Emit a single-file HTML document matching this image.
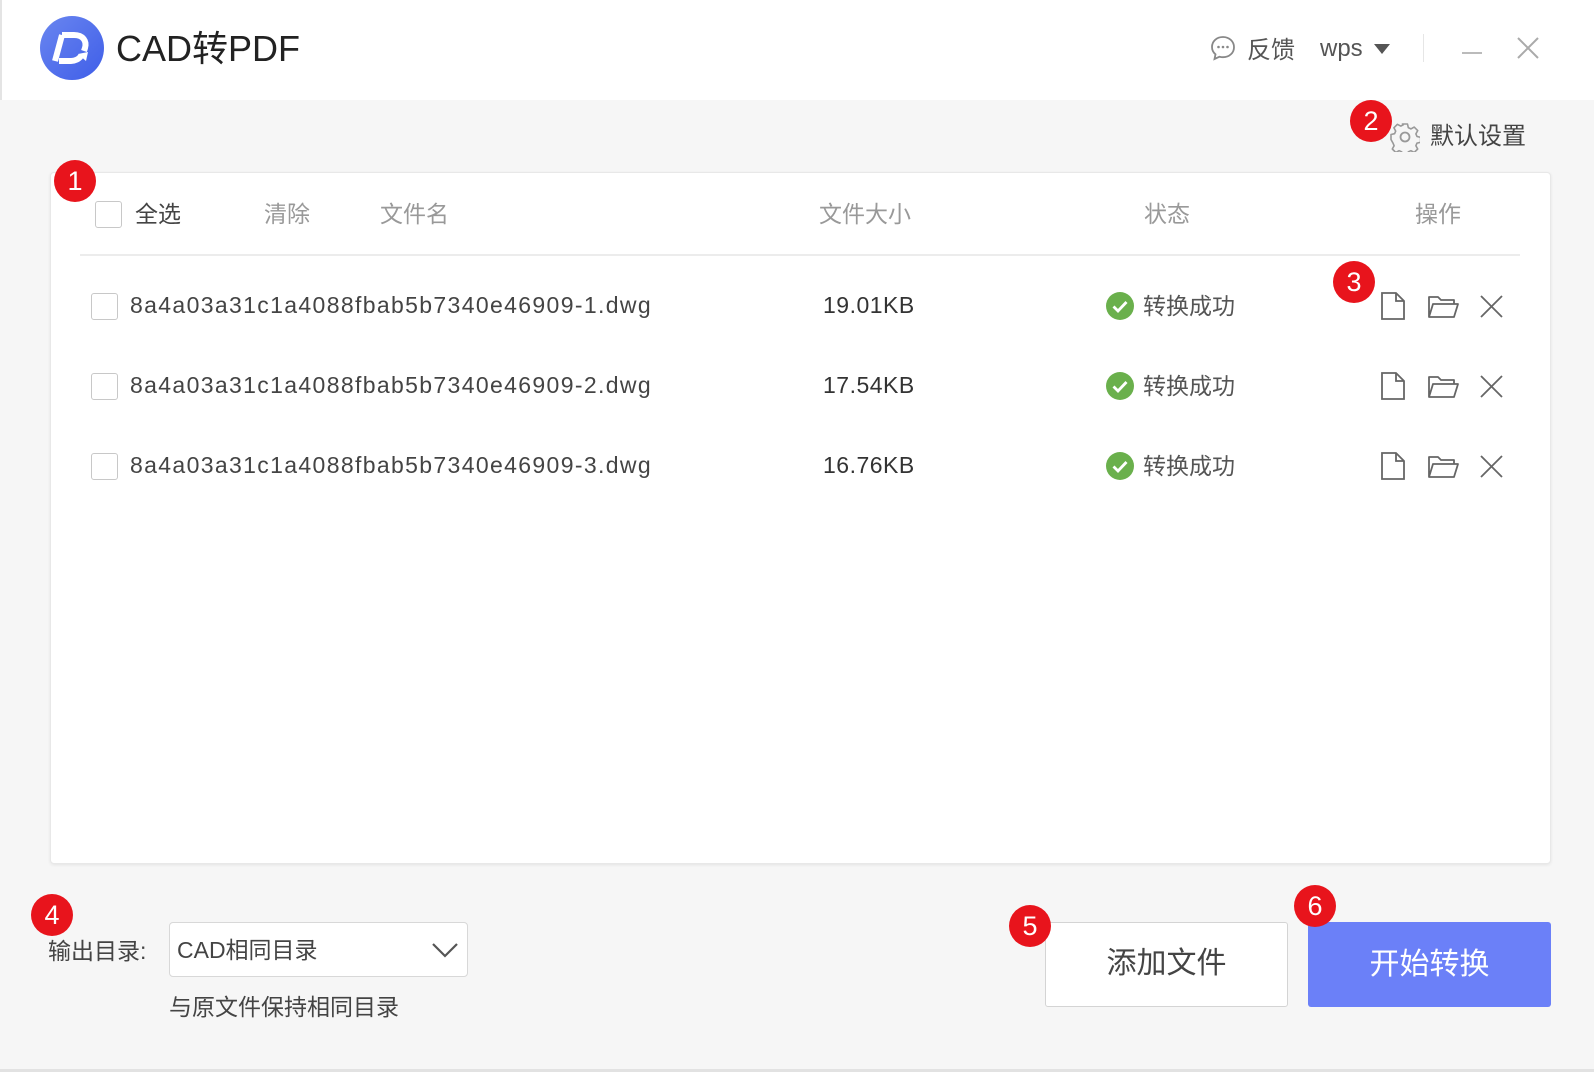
<!DOCTYPE html>
<html><head><meta charset="utf-8"><style>
*{margin:0;padding:0;box-sizing:border-box}
body{width:1594px;height:1072px;background:#f6f6f6;font-family:"Liberation Sans","Noto Sans CJK SC",sans-serif;position:relative;overflow:hidden;color:#333}
.a{position:absolute;white-space:nowrap}
.badge{position:absolute;width:42px;height:42px;border-radius:50%;background:#e8141c;color:#fff;font-size:27px;line-height:42px;text-align:center;font-family:"Liberation Sans",sans-serif}
.cb{position:absolute;width:27px;height:27px;border:1.5px solid #c8c8c8;border-radius:3px;background:#fff}
.fn{font-size:23px;color:#444;letter-spacing:1.35px}
.sz{font-size:23px;color:#333;letter-spacing:0.5px}
.st{font-size:23px;color:#555}
</style></head><body>
<div class="a" style="left:0;top:0;width:1594px;height:100px;background:#fff;border-left:2px solid #e4e4e4"></div>
<svg class="a" style="left:40px;top:16px" width="64" height="64" viewBox="0 0 64 64"><defs><linearGradient id="g" x1="0" y1="0" x2="1" y2="1"><stop offset="0" stop-color="#6a86f0"/><stop offset="1" stop-color="#3f5ee8"/></linearGradient></defs><circle cx="32" cy="32" r="32" fill="url(#g)"/><path d="M22 19h12c9 0 13 6 11 13l-1 3M19 45h12c4 0 8-2 10-5M22 19l-7 26" stroke="#fff" stroke-width="6" fill="none" stroke-linejoin="round"/><path d="M38 38l10-2-2 9z" fill="#fff"/></svg>
<div class="a" style="left:116px;top:20px;font-size:36px;color:#222">CAD转PDF</div>
<svg class="a" style="left:1209px;top:34px" width="28" height="28" viewBox="0 0 28 28"><path d="M14 3C7.5 3 3 7.5 3 13c0 3 1.3 5.5 3.5 7.3L5.5 25l5-2.3c1.1.3 2.3.5 3.5.5 6.5 0 11-4.5 11-10S20.5 3 14 3z" fill="none" stroke="#888" stroke-width="1.8"/><circle cx="9.5" cy="13" r="1.3" fill="#888"/><circle cx="14" cy="13" r="1.3" fill="#888"/><circle cx="18.5" cy="13" r="1.3" fill="#888"/></svg>
<div class="a" style="left:1247px;top:30px;font-size:24px;color:#555">反馈</div>
<div class="a" style="left:1320px;top:35px;font-size:24px;color:#555">wps</div>
<svg class="a" style="left:1374px;top:44px" width="16" height="10"><path d="M0 0h16L8 10z" fill="#555"/></svg>
<div class="a" style="left:1423px;top:34px;width:1px;height:28px;background:#e6e6e6"></div>
<div class="a" style="left:1462px;top:52px;width:20px;height:2px;background:#bbb"></div>
<svg class="a" style="left:1517px;top:37px" width="22" height="22"><path d="M1 1L21 21M21 1L1 21" stroke="#aaa" stroke-width="2"/></svg>

<svg class="a" style="left:1390px;top:122px" width="30" height="30" viewBox="0 0 30 30"><path d="M12.5 2h5l.8 3.6 2.6 1.3 3.3-1.8 3.5 3.5-1.8 3.3 1.1 2.6 3.6.8v5l-3.6.8-1.1 2.6 1.8 3.3-3.5 3.5-3.3-1.8-2.6 1.1-.8 3.6h-5l-.8-3.6-2.6-1.1-3.3 1.8-3.5-3.5 1.8-3.3-1.100-2.6L1 17.5v-5l3.6-.8 1.1-2.6-1.8-3.3 3.5-3.5 3.3 1.8 2.6-1.3z" fill="none" stroke="#999" stroke-width="1.6" stroke-linejoin="round"/><circle cx="15" cy="15" r="4.5" fill="none" stroke="#999" stroke-width="1.8"/></svg>
<div class="a" style="left:1430px;top:116px;font-size:24px;color:#444">默认设置</div>

<div class="a" style="left:50px;top:172px;width:1501px;height:692px;background:#fff;border:1px solid #e8e8e8;border-radius:4px;box-shadow:0 1px 3px rgba(0,0,0,.08)"></div>
<div class="cb" style="left:95px;top:201px"></div>
<div class="a" style="left:135px;top:195px;font-size:23px;color:#444">全选</div>
<div class="a" style="left:264px;top:195px;font-size:23px;color:#999">清除</div>
<div class="a" style="left:380px;top:195px;font-size:23px;color:#999">文件名</div>
<div class="a" style="left:819px;top:195px;font-size:23px;color:#999">文件大小</div>
<div class="a" style="left:1144px;top:195px;font-size:23px;color:#999">状态</div>
<div class="a" style="left:1415px;top:195px;font-size:23px;color:#999">操作</div>
<div class="a" style="left:80px;top:254px;width:1440px;height:2px;background:#ececec"></div>

<div class="cb" style="left:91px;top:293px"></div>
<div class="a fn" style="left:130px;top:292px">8a4a03a31c1a4088fbab5b7340e46909-1.dwg</div>
<div class="a sz" style="left:823px;top:292px">19.01KB</div>
<div class="cb" style="left:91px;top:373px"></div>
<div class="a fn" style="left:130px;top:372px">8a4a03a31c1a4088fbab5b7340e46909-2.dwg</div>
<div class="a sz" style="left:823px;top:372px">17.54KB</div>
<div class="cb" style="left:91px;top:453px"></div>
<div class="a fn" style="left:130px;top:452px">8a4a03a31c1a4088fbab5b7340e46909-3.dwg</div>
<div class="a sz" style="left:823px;top:452px">16.76KB</div>

<svg width="0" height="0" style="position:absolute"><defs>
<g id="ok"><circle cx="14" cy="14" r="14" fill="#6ab04c"/><path d="M7.5 14.5l4.5 4.5 8.5-9" stroke="#fff" stroke-width="2.8" fill="none"/></g>
<g id="ops" fill="none" stroke="#666" stroke-width="1.8"><path d="M2 2h14l8 8v18H2z M16 2v8h8"/><path d="M49 26V6h9l3 3h13v4 M49 26l4-13h25l-4 13z" stroke-linejoin="round"/><path d="M101 5l21 21M122 5l-21 21"/></g>
</defs></svg>
<svg class="a" style="left:1106px;top:292px" width="28" height="28"><use href="#ok"/></svg>
<svg class="a" style="left:1106px;top:372px" width="28" height="28"><use href="#ok"/></svg>
<svg class="a" style="left:1106px;top:452px" width="28" height="28"><use href="#ok"/></svg>
<div class="a st" style="left:1143px;top:287px">转换成功</div>
<div class="a st" style="left:1143px;top:367px">转换成功</div>
<div class="a st" style="left:1143px;top:447px">转换成功</div>
<svg class="a" style="left:1380px;top:291px" width="126" height="31"><use href="#ops"/></svg>
<svg class="a" style="left:1380px;top:371px" width="126" height="31"><use href="#ops"/></svg>
<svg class="a" style="left:1380px;top:451px" width="126" height="31"><use href="#ops"/></svg>

<div class="a" style="left:48px;top:932px;font-size:23px;color:#444">输出目录:</div>
<div class="a" style="left:169px;top:922px;width:299px;height:55px;background:#fff;border:1.5px solid #d8d8d8;border-radius:4px"></div>
<div class="a" style="left:177px;top:931px;font-size:23px;color:#444">CAD相同目录</div>
<svg class="a" style="left:432px;top:942px" width="26" height="16"><path d="M1 2l12 12L25 2" stroke="#555" stroke-width="2.2" fill="none"/></svg>
<div class="a" style="left:169px;top:988px;font-size:23px;color:#444">与原文件保持相同目录</div>
<div class="a" style="left:1045px;top:922px;width:243px;height:85px;background:#fff;border:1.5px solid #d4d4d4;border-radius:3px;font-size:30px;color:#444;text-align:center;line-height:82px">添加文件</div>
<div class="a" style="left:1308px;top:922px;width:243px;height:85px;background:#6b80f8;border-radius:3px;font-size:30px;color:#fff;text-align:center;line-height:85px">开始转换</div>
<div class="a" style="left:0;top:1069px;width:1594px;height:3px;background:#e2e2e2"></div>

<div class="badge" style="left:54px;top:160px">1</div>
<div class="badge" style="left:1350px;top:100px">2</div>
<div class="badge" style="left:1333px;top:261px">3</div>
<div class="badge" style="left:31px;top:894px">4</div>
<div class="badge" style="left:1009px;top:905px">5</div>
<div class="badge" style="left:1294px;top:885px">6</div>
</body></html>
